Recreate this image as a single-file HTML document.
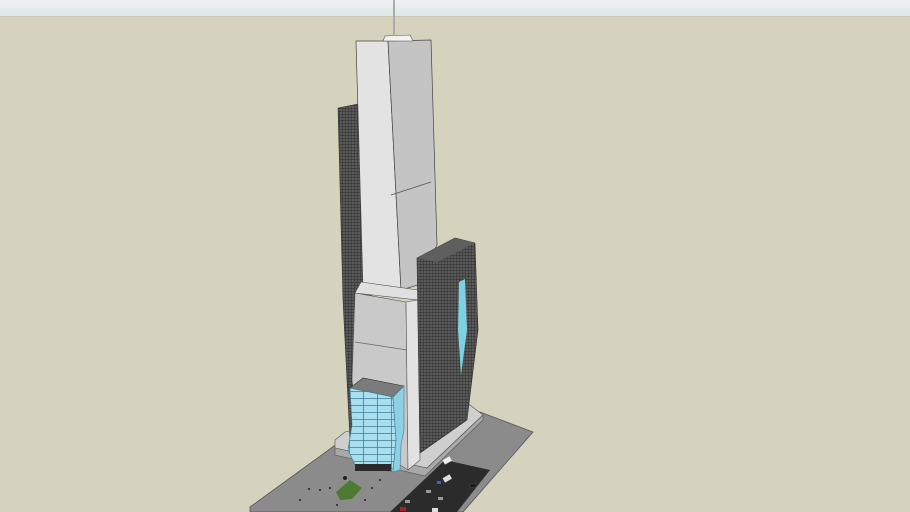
<!DOCTYPE html>
<html><head><style>html,body{margin:0;padding:0;width:910px;height:512px;overflow:hidden;background:#d5d3be}</style></head>
<body>
<svg width="910" height="512" viewBox="0 0 910 512" xmlns="http://www.w3.org/2000/svg">
<defs>
<linearGradient id="sky" x1="0" y1="0" x2="0" y2="1"><stop offset="0" stop-color="#eef2f1"/><stop offset="1" stop-color="#dfe7e7"/></linearGradient>
<pattern id="brick" width="3" height="3" patternUnits="userSpaceOnUse"><rect width="3" height="3" fill="#5a5a5a"/><path d="M0 0H3M0 0V3" stroke="#2e2e2e" stroke-width="1"/></pattern>
<pattern id="glass" width="14" height="7" patternUnits="userSpaceOnUse"><rect width="14" height="7" fill="#a9deee"/><path d="M0 6.5H14M13.5 0V7" stroke="#3f7f96" stroke-width="0.8"/></pattern>
</defs>
<rect x="0" y="0" width="910" height="16" fill="url(#sky)"/>
<rect x="0" y="16" width="910" height="1" fill="#c9c8b3"/>
<polygon points="250,507 345,438 480,412 533,432 463,512 250,512" fill="#8b8b8b" stroke="#555" stroke-width="0.8"/>
<polygon points="445,460 490,470 457,512 390,512" fill="#2b2b2b"/>
<polygon points="335,440 345,432 470,405 483,415 427,468 335,448" fill="#cfcfcf" stroke="#555" stroke-width="0.6"/>
<polygon points="335,448 427,468 483,415 483,420 425,476 335,455" fill="#a9a9a9" stroke="#555" stroke-width="0.6"/>
<polygon points="338,108 358,104 372,300 360,440 350,440 343,300" fill="url(#brick)" stroke="#333" stroke-width="0.6"/>
<polygon points="356,41 388,41 401,290 363,290" fill="#e3e3e3" stroke="#444" stroke-width="0.7"/>
<polygon points="388,41 431,40 437,245 418,285 401,290" fill="#c4c4c4" stroke="#444" stroke-width="0.7"/>
<line x1="391" y1="195" x2="431" y2="182" stroke="#555" stroke-width="0.8"/>
<polygon points="385,36 410,35 413,41 383,41" fill="#f2f2f2" stroke="#555" stroke-width="0.6"/>
<rect x="393" y="0" width="2" height="36" fill="#aaa"/>
<polygon points="361,282 418,290 418,300 355,293" fill="#e0e0e0" stroke="#555" stroke-width="0.6"/>
<polygon points="355,293 406,302 408,470 360,440 352,380" fill="#c9c9c9" stroke="#555" stroke-width="0.6"/>
<polygon points="406,302 418,300 420,460 408,470" fill="#e2e2e2" stroke="#555" stroke-width="0.6"/>
<line x1="355" y1="342" x2="407" y2="350" stroke="#666" stroke-width="0.7"/>
<polygon points="417,258 455,238 475,243 478,330 467,420 420,453" fill="url(#brick)" stroke="#333" stroke-width="0.6"/>
<polygon points="417,258 455,238 475,243 437,262" fill="#5f5f5f"/>
<polygon points="459,282 465,279 467,330 461,375 458,330" fill="#7fd0e3"/>
<polygon points="350,388 363,378 404,386 393,397" fill="#7b7b7b" stroke="#333" stroke-width="0.6"/>
<polygon points="350,388 393,397 396,440 393,472 355,465 348,450 352,425" fill="url(#glass)" stroke="#3f7f96" stroke-width="0.7"/>
<polygon points="393,397 404,386 404,430 401,445 400,470 393,472 396,440" fill="#8dcfe3" stroke="#3f7f96" stroke-width="0.6"/>
<rect x="355" y="464" width="36" height="7" fill="#2a2a2a"/>
<polygon points="336,492 350,480 362,488 352,499 340,500" fill="#4e7a34"/>
<g fill="#222">
<circle cx="345" cy="478" r="2"/><circle cx="330" cy="488" r="1"/><circle cx="320" cy="490" r="1"/><circle cx="372" cy="488" r="1"/><circle cx="380" cy="480" r="1"/><circle cx="300" cy="500" r="1"/><circle cx="365" cy="500" r="1"/><circle cx="337" cy="505" r="1"/><circle cx="309" cy="489" r="1"/>
</g>
<rect x="443" y="458" width="8" height="5" fill="#eee" transform="rotate(-30 447 460)"/>
<rect x="443" y="476" width="8" height="5" fill="#ddd" transform="rotate(-30 447 478)"/>
<rect x="437" y="481" width="4" height="3" fill="#36c"/>
<rect x="470" y="484" width="6" height="3" fill="#111" stroke="#555" stroke-width="0.5"/>
<rect x="426" y="490" width="5" height="3" fill="#999"/>
<rect x="438" y="497" width="5" height="3" fill="#999"/>
<rect x="405" y="500" width="5" height="3" fill="#999"/>
<rect x="400" y="507" width="6" height="4" fill="#a22"/>
<rect x="432" y="508" width="6" height="4" fill="#ddd"/>
</svg>
</body></html>
